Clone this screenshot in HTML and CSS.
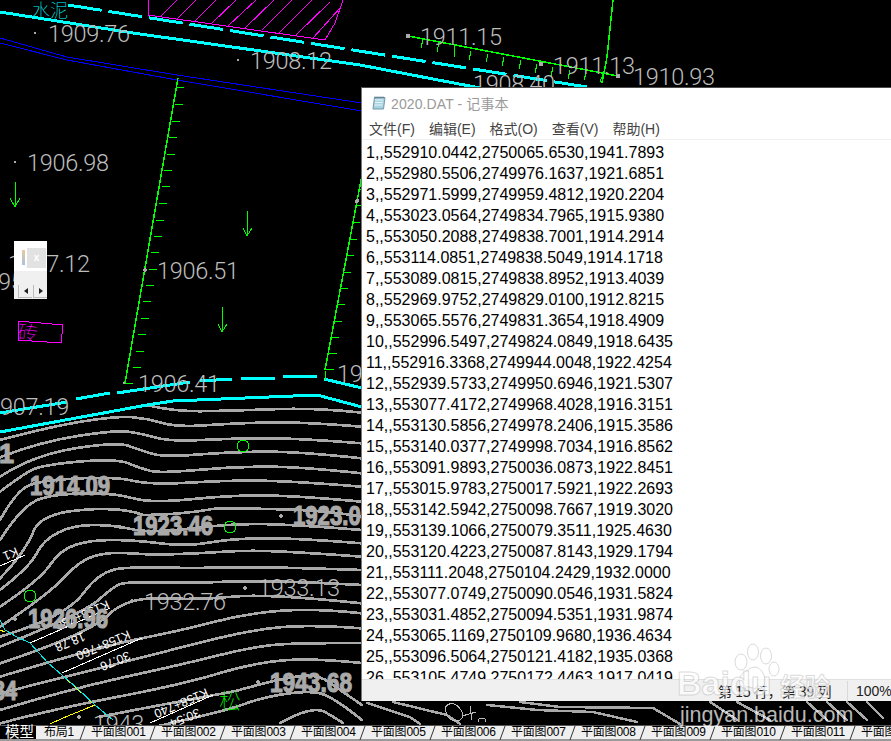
FILE: index.html
```html
<!DOCTYPE html>
<html lang="zh">
<head>
<meta charset="utf-8">
<title>2020.DAT - 记事本</title>
<link rel="stylesheet" href="styles.css">
</head>
<body>
<div class="screen">
  <div class="canvas">
    <svg class="drawing" viewBox="0 0 891 725" width="891" height="725" xmlns="http://www.w3.org/2000/svg">
      <!-- contours, in 3x crop coordinates of the lower half -->
      <g class="contours" transform="translate(0,370) scale(0.33333)">
        <path d="M440 105Q520 125 610 123.5Q700 122 825 117.5Q950 113 1085 128"/>
        <path d="M0 210Q150 170 250 154Q350 138 395 141.5Q440 145 485 158.5Q530 172 615 166Q700 160 800 157.5Q900 155 1085 170"/>
        <path d="M0 262Q120 215 235 197.5Q350 180 385 185Q420 190 465 202.5Q510 215 605 210Q700 205 800 205Q900 205 1085 220"/>
        <path d="M0 320Q100 255 225 235Q350 215 385 227.5Q420 240 455 251Q490 262 595 253.5Q700 245 800 245Q900 245 1085 265"/>
        <path d="M0 365Q60 320 90 302.5Q120 285 235 275Q350 265 385 280Q420 295 450 302.5Q480 310 590 300Q700 290 800 290Q900 290 1085 310"/>
        <path d="M0 450Q50 360 90 345Q130 330 240 325Q350 320 400 332.5Q450 345 575 337.5Q700 330 800 332.5Q900 335 1085 350"/>
        <path d="M0 510Q70 400 125 385Q180 370 265 370Q350 370 400 385Q450 400 575 387.5Q700 375 800 376.5Q900 378 1085 395"/>
        <path d="M0 625Q75 550 105 475Q125 440 200 425Q350 405 430 435Q540 435 650 415Q775 415 900 420Q1000 425 1085 440"/>
        <path d="M0 660Q90 590 110 550Q130 510 175 487.5Q220 465 280 465Q340 465 395 477.5Q450 490 575 475Q700 460 800 462.5Q900 465 1085 480"/>
        <path d="M0 710Q120 630 150 585Q180 540 225 525Q270 510 335 510Q400 510 480 520Q560 530 630 517.5Q700 505 800 505Q900 505 1085 520"/>
        <path d="M0 770Q150 670 195 620Q240 570 285 557.5Q330 545 390 550Q450 555 525 552.5Q600 550 675 545Q750 540 850 545Q950 550 1085 560"/>
        <path d="M0 800Q200 740 250 670Q300 600 365 595Q430 590 495 592.5Q560 595 680 592.5Q800 590 1085 600"/>
        <path d="M0 830Q250 730 295 690Q340 650 360 642.5Q380 635 470 637.5Q560 640 680 635Q800 630 1085 645"/>
        <path d="M0 880Q270 790 325 735Q380 680 490 685Q600 690 700 680Q800 670 1085 700"/>
        <path d="M0 920Q300 830 425 805Q550 780 645 755Q740 730 845 722Q950 715 1085 730"/>
        <path d="M0 970Q400 870 475 850Q550 830 665 802Q780 775 865 770Q950 765 1085 775"/>
        <path d="M0 1020Q200 960 370 922Q540 885 660 855Q780 825 860 822Q939 819 1085 819"/>
        <path d="M0 1060Q150 1020 345 982Q540 945 650 912Q759 879 849 871Q939 864 1085 879"/>
        <path d="M300 1040Q639 975 669 970.5Q699 966 762 948Q825 930 887 920Q950 910 985 935Q1020 960 1086 1005"/>
        <path d="M400 1085Q669 1026 729 1003.5Q789 981 864 970.5Q939 960 975 975Q1011 990 1086 1050"/>
        <path d="M840 1059Q939 1005 975 1026Q1011 1047 1029 1059"/>
      </g>
      <g class="contours contours-right">
        <polyline points="367,703 410,717 420,724"/>
        <polyline points="393,702 447,715 460,724"/>
        <polyline points="487,705 537,710 593,712 637,722"/>
        <polyline points="520,702 560,707 653,708 680,724"/>
        <polyline points="710,702 737,720"/>
        <polyline points="737,702 770,720"/>
        <polyline points="807,702 827,720"/>
        <polyline points="827,702 847,720"/>
        <polyline points="847,702 867,720"/>
        <polyline points="867,702 883,718"/>
      </g>

      <!-- cyan road edges -->
      <polyline class="cyan" points="0,12 133,33 360,65 480,88"/>
      <line class="cyan dashed" x1="68" y1="5" x2="587" y2="87"/>
      <polyline class="cyan" points="0,432 147,405 173,401 317,395 362,407"/>
      <line class="cyan" x1="0" y1="413" x2="67" y2="402"/>
      <line class="cyan" x1="76" y1="399" x2="110" y2="393"/>
      <line class="cyan" x1="117" y1="393" x2="190" y2="382"/>
      <line class="cyan" x1="200" y1="381" x2="232" y2="379"/>
      <line class="cyan" x1="241" y1="379" x2="275" y2="378"/>
      <line class="cyan" x1="283" y1="377" x2="317" y2="376"/>
      <line class="cyan" x1="324" y1="379" x2="362" y2="388"/>

      <!-- blue ditch -->
      <polyline class="blue" points="0,38 67,57 177,75 362,103"/>
      <polyline class="blue" points="0,43 67,60 177,80 362,111"/>

      <!-- magenta building -->
      <path class="magenta" d="M148 0V15L325 40L335 23L343 0"/>
      <path class="magenta" d="M160 17L177 0M177 19L196 0M194 22L216 0M211 24L236 0M228 26L256 0M245 28L274 0M262 30L292 0M279 33L312 0M296 35L330 2M313 38L340 8"/>
      <path class="magenta" d="M18 321L63 325L61 343L18 340Z"/>
      <text class="brick" x="17" y="339" transform="rotate(6 17 339)">砖</text>

      <!-- green ticked lines -->
      <path class="green green-main" d="M178 78L125 383"/>
      <path class="green" d="M176 87l8 1M175 104l8 1M172 121l8 1M169 137l8 1M167 154l8 1M164 170l8 1M162 186l8 1M159 203l8 1M156 220l8 1M154 236l8 1M151 252l8 1M149 269l8 1M146 285l8 1M143 301l8 1M141 318l8 1M138 334l8 1M136 351l8 1M133 367l8 1M125 383l8 1"/>
      <path class="green green-main" d="M362 175L325 370"/>
      <path class="green" d="M358 189h4M355 205l7 1M352 222l8 1M349 239l8 1M346 255l8 1M343 272l8 1M340 288l8 1M337 304l8 1M334 321l8 1M331 337l8 1M329 353l8 1M326 369l8 1"/>
      <path class="green green-main" d="M408 36L618 76M613 0L607 57L602 83"/>
      <path class="green" d="M423 39L421 48M439 42L437 52M455 46L454 57M471 51L469 60M488 54L486 62M504 57L502 66M521 60L519 69M537 64L535 73M553 67L551 76M570 70L568 79M586 73L584 80M603 74L600 82M325 371V380"/>
      <path class="green" d="M15 182V207M10 198L15 207L20 198M247 211V236M243 228L247 236L252 228M222 307V332M218 324L222 332L227 324"/>
      <circle class="green" cx="243" cy="446" r="6"/>
      <circle class="green" cx="230" cy="527" r="6"/>
      <circle class="green" cx="30" cy="596" r="6"/>
      <text class="tree" x="219" y="709">松</text>

      <!-- survey lines -->
      <polyline class="yellow" points="0,630 5,632"/>
      <polyline class="yellow" points="30,643 47,662 62,675 95,705 63,718 50,724"/>
      <polyline class="thin-cyan" points="0,620 5,630 17,637 30,643 48,663 62,675 77,688 95,705 113,720"/>
      <path class="white" d="M30 643L110 608M62 673L142 638M150 723L213 695M0 566L25 555"/>
      <g class="station">
        <text x="107" y="600" transform="rotate(157 107 600)">K158+780</text>
        <text x="83" y="632" transform="rotate(157 83 632)">18.78</text>
        <text x="128" y="630" transform="rotate(157 128 630)">K158+760</text>
        <text x="128" y="651" transform="rotate(157 128 651)">30.76</text>
        <text x="206" y="688" transform="rotate(157 206 688)">K158+740</text>
        <text x="198" y="708" transform="rotate(157 198 708)">30.54</text>
        <text x="16" y="547" transform="rotate(157 16 547)">K1</text>
      </g>
      <path class="scribble" d="M445 708C450 700 458 704 462 712C466 722 452 724 447 716ZM462 716L476 712M470 706L472 720M478 722A4 4 0 1 1 486 722"/>

      <!-- spot heights -->
      <g class="dots">
        <circle cx="35" cy="33" r="1.6"/><circle cx="238" cy="60" r="1.6"/><circle cx="15" cy="162" r="1.6"/>
        <circle cx="145" cy="270" r="1.8"/><circle cx="124" cy="383" r="1.6"/><circle cx="357" cy="201" r="2"/>
        <rect x="406" y="34" width="4" height="4"/><rect x="539" y="62" width="4" height="4"/><rect x="616" y="74" width="4" height="4"/>
        <circle cx="120" cy="527" r="1.8"/><circle cx="281" cy="516" r="1.8"/><circle cx="15" cy="619" r="1.8"/>
        <circle cx="132" cy="601" r="1.8"/><circle cx="245" cy="588" r="1.8"/><circle cx="258" cy="682" r="1.8"/><circle cx="79" cy="717" r="1.8"/>
      </g>
      <g class="height">
        <text x="48" y="42">1909.76</text>
        <text x="250" y="69">1908.12</text>
        <text x="27" y="171">1906.98</text>
        <text x="157" y="279">1906.51</text>
        <text x="8" y="272">1907.12</text>
        <text x="-2" y="290">95</text>
        <text x="138" y="392">1906.41</text>
        <text x="0" y="415">907.19</text>
        <text x="337" y="382">19</text>
        <text x="420" y="45">1911.15</text>
        <text x="553" y="74">1911.13</text>
        <text x="633" y="85">1910.93</text>
        <text x="473" y="92">1908.40</text>
        <text x="258" y="596">1933.13</text>
        <text x="144" y="610">1932.76</text>
        <text x="93" y="732">1943</text>
      </g>
      <g class="height-bold">
        <text x="-1" y="463">1</text>
        <text x="30" y="495" textLength="80" lengthAdjust="spacingAndGlyphs">1914.09</text>
        <text x="133" y="535" textLength="80" lengthAdjust="spacingAndGlyphs">1923.46</text>
        <text x="293" y="525" textLength="80" lengthAdjust="spacingAndGlyphs">1923.07</text>
        <text x="28" y="628" textLength="80" lengthAdjust="spacingAndGlyphs">1926.96</text>
        <text x="270" y="692" textLength="82" lengthAdjust="spacingAndGlyphs">1943.68</text>
        <text x="-7" y="700" textLength="24" lengthAdjust="spacingAndGlyphs">34</text>
      </g>
      <text class="cement" x="32" y="17">水泥</text>
    </svg>

    <div class="mini">
      <div class="mini-top">
        <span class="mini-icon"></span>
        <span class="mini-close">x</span>
      </div>
      <div class="mini-scroll">
        <span class="mini-arrow mini-left"></span>
        <span class="mini-arrow mini-right"></span>
      </div>
    </div>
  </div>

  <nav class="tabs">
    <span class="tab tab-active">模型</span>
    <span class="tab tab-layout">布局1</span>
    <span class="tab">平面图001</span>
    <span class="tab">平面图002</span>
    <span class="tab">平面图003</span>
    <span class="tab">平面图004</span>
    <span class="tab">平面图005</span>
    <span class="tab">平面图006</span>
    <span class="tab">平面图007</span>
    <span class="tab">平面图008</span>
    <span class="tab">平面图009</span>
    <span class="tab">平面图010</span>
    <span class="tab">平面图011</span>
    <span class="tab">平面图012</span>
  </nav>

  <section class="notepad">
    <header class="titlebar">
      <svg class="note-icon" viewBox="0 0 16 16" width="16" height="16" xmlns="http://www.w3.org/2000/svg">
        <path d="M3.5 2.5H14L12.5 14H2Z" fill="#a9d3e0" stroke="#6f97a8"/>
        <path d="M4 5H12M4 7.5H12M3.5 10H11.5" stroke="#e7f3f6" fill="none"/>
        <path d="M4 1.5V3.5M6 1.5V3.5M8 1.5V3.5M10 1.5V3.5M12 1.5V3.5" stroke="#56707c" fill="none"/>
      </svg>
      <span class="title">2020.DAT - 记事本</span>
    </header>
    <div class="menu">
      <span>文件(F)</span><span>编辑(E)</span><span>格式(O)</span><span>查看(V)</span><span>帮助(H)</span>
    </div>
    <pre class="content">1,,552910.0442,2750065.6530,1941.7893
2,,552980.5506,2749976.1637,1921.6851
3,,552971.5999,2749959.4812,1920.2204
4,,553023.0564,2749834.7965,1915.9380
5,,553050.2088,2749838.7001,1914.2914
6,,553114.0851,2749838.5049,1914.1718
7,,553089.0815,2749838.8952,1913.4039
8,,552969.9752,2749829.0100,1912.8215
9,,553065.5576,2749831.3654,1918.4909
10,,552996.5497,2749824.0849,1918.6435
11,,552916.3368,2749944.0048,1922.4254
12,,552939.5733,2749950.6946,1921.5307
13,,553077.4172,2749968.4028,1916.3151
14,,553130.5856,2749978.2406,1915.3586
15,,553140.0377,2749998.7034,1916.8562
16,,553091.9893,2750036.0873,1922.8451
17,,553015.9783,2750017.5921,1922.2693
18,,553142.5942,2750098.7667,1919.3020
19,,553139.1066,2750079.3511,1925.4630
20,,553120.4223,2750087.8143,1929.1794
21,,553111.2048,2750104.2429,1932.0000
22,,553077.0749,2750090.0546,1931.5824
23,,553031.4852,2750094.5351,1931.9874
24,,553065.1169,2750109.9680,1936.4634
25,,553096.5064,2750121.4182,1935.0368
26,,553105.4749,2750172.4463,1917.0419</pre>
    <footer class="status">
      <span class="status-pos">第 15 行，第 39 列</span>
      <span class="status-zoom">100%</span>
    </footer>
  </section>

  <svg class="watermark" viewBox="0 0 891 741" width="891" height="741" xmlns="http://www.w3.org/2000/svg">
    <g class="paw">
      <ellipse cx="741" cy="662" rx="6" ry="8"/>
      <ellipse cx="753" cy="652" rx="5.5" ry="8"/>
      <ellipse cx="766" cy="656" rx="5.5" ry="8"/>
      <ellipse cx="774" cy="669" rx="5" ry="7"/>
      <path d="M755 667C764 668 769 684 761 688C755 690 752 686 745 688C737 688 738 675 745 672C749 670 750 667 755 667Z"/>
    </g>
    <text class="wm-brand" x="677" y="695">Baidu</text>
    <text class="wm-cn" x="780" y="696">经验</text>
    <text class="wm-url" x="680" y="722">jingyan.baidu.com</text>
  </svg>
</div>
</body>
</html>
```
FILE: styles.css
```css
* { box-sizing: border-box; }
html, body { margin: 0; padding: 0; background: #000; }
body { width: 891px; height: 741px; overflow: hidden; font-family: "Liberation Sans", "Noto Sans CJK SC", sans-serif; }

.screen { position: relative; width: 891px; height: 741px; display: flex; flex-direction: column; overflow: hidden; }
.canvas { position: relative; flex: 1; min-height: 0; background: #000; overflow: hidden; }
.drawing { display: block; shape-rendering: crispEdges; }

.contours path, .contours polyline { fill: none; stroke: #a9a9a9; stroke-width: 8; stroke-linejoin: round; stroke-linecap: round; }
.contours-right polyline { stroke-width: 2.5; }

.cyan { fill: none; stroke: #00ffff; stroke-width: 3; }
.dashed { stroke-dasharray: 34 7; }
.blue { fill: none; stroke: #0000ff; stroke-width: 1; }
.magenta { fill: none; stroke: #ff00ff; stroke-width: 1; }
.green { fill: none; stroke: #00ff00; stroke-width: 1; }
.green-main { stroke-width: 1.5; }
.thin-cyan { fill: none; stroke: #00e5e5; stroke-width: 1; }
.yellow { fill: none; stroke: #ffff00; stroke-width: 1; }
.white { fill: none; stroke: #fff; stroke-width: 1; }
.scribble { fill: none; stroke: #bbb; stroke-width: 1; }

.brick { fill: #ff00ff; font: 100 20px "Noto Sans CJK SC", sans-serif; }
.tree { fill: #00ff00; font: 100 22px "Noto Sans CJK SC", sans-serif; }
.cement { fill: #00ffff; font: 100 18px "Noto Sans CJK SC", sans-serif; }

.dots { fill: #aaa; }
.height text { fill: #bdbdbd; font: 300 23.5px Roboto, "Liberation Sans", sans-serif; letter-spacing: -0.3px; }
.height-bold text { fill: #a9a9a9; stroke: #a9a9a9; stroke-width: 1.2; font: 700 27px "Liberation Sans", sans-serif; }
.station text { fill: #fff; font: 400 12.5px "Liberation Sans", sans-serif; }

.mini { position: absolute; left: 14px; top: 241px; width: 33px; height: 58px; background: #f0f0f0; display: flex; flex-direction: column; }
.mini-top { height: 30px; background: #fff; position: relative; }
.mini-icon { position: absolute; left: 8px; top: 9px; width: 3px; height: 15px; background: linear-gradient(#e8c9a0, #a9c3dc); }
.mini-close { position: absolute; left: 13px; top: 7px; width: 19px; height: 20px; background: #e2e2e2; color: #fff; font: 700 10px/20px "Liberation Sans", sans-serif; text-align: center; }
.mini-scroll { flex: 1; display: flex; justify-content: flex-end; align-items: flex-end; padding: 0 0 1px 3px; gap: 1px; }
.mini-arrow { width: 14px; height: 13px; position: relative; border-left: 1px solid #bbb; border-bottom: 1px solid #bbb; }
.mini-arrow::after { content: ""; position: absolute; top: 3px; left: 5px; border: 3.5px solid transparent; }
.mini-left::after { border-right: 4px solid #222; border-left: 0; }
.mini-right::after { border-left: 4px solid #222; border-right: 0; }

.tabs { flex: 0 0 16px; height: 16px; display: flex; background: #efefef; border-top: 1px solid #555; border-bottom: 2px solid #9a9a9a; font: 12px/13px "Liberation Sans", "Noto Sans CJK SC", sans-serif; letter-spacing: -0.2px; color: #000; white-space: nowrap; }
.tab { flex: 0 0 70px; padding-left: 8px; position: relative; }
.tab::after { content: ""; position: absolute; right: 0; top: 0; width: 1px; height: 14px; background: #333; transform: skewX(-20deg); }
.tab-active { flex: 0 0 36px; padding-left: 5px; background: #000; color: #fff; font-size: 14.5px; letter-spacing: 0; }
.tab-active::after { display: none; }
.tab-layout { flex: 0 0 47px; padding-left: 8px; }

.notepad { position: absolute; left: 361px; top: 87px; width: 530px; height: 614px; background: #fff; border-top: 1px solid #4a4a4a; border-left: 1px solid #777; display: flex; flex-direction: column; color: #000; }
.titlebar { flex: 0 0 29px; height: 29px; display: flex; align-items: center; padding-left: 9px; gap: 4px; }
.note-icon { flex: none; }
.title { font-size: 14px; color: #9a9a9a; letter-spacing: 0.1px; }
.menu { flex: 0 0 23px; height: 23px; display: flex; gap: 14px; padding: 3px 0 0 7px; font-size: 14px; line-height: 19px; color: #444; border-bottom: 1px solid #f0f0f0; }
.content { flex: 1; min-height: 0; margin: 0; padding: 2px 0 0 4px; overflow: hidden; font: 16px/21px "Liberation Sans", sans-serif; color: #000; }
.status { flex: 0 0 22px; display: flex; justify-content: flex-end; align-items: center; background: #f0f0f0; font-size: 14px; color: #222; border-top: 1px solid #e0e0e0; }
.status-pos { width: 129px; font-family: "Noto Sans CJK SC", sans-serif; font-size: 14px; line-height: 20px; white-space: nowrap; }
.status-zoom { width: 44px; padding-left: 8px; border-left: 1px solid #d9d9d9; line-height: 20px; white-space: nowrap; }

.watermark { position: absolute; left: 0; top: 0; pointer-events: none; }
.paw { fill: rgba(255,255,255,0.75); stroke: rgba(150,150,150,0.35); stroke-width: 1; }
.wm-brand { font: 700 34px "Liberation Sans", sans-serif; fill: rgba(255,255,255,0.7); stroke: rgba(150,150,150,0.35); stroke-width: 1; }
.wm-cn { font: 700 25px "Noto Sans CJK SC", sans-serif; fill: rgba(255,255,255,0.7); stroke: rgba(150,150,150,0.35); stroke-width: 1; }
.wm-url { font: 400 21.5px "Liberation Sans", sans-serif; fill: rgba(255,255,255,0.72); }
```
